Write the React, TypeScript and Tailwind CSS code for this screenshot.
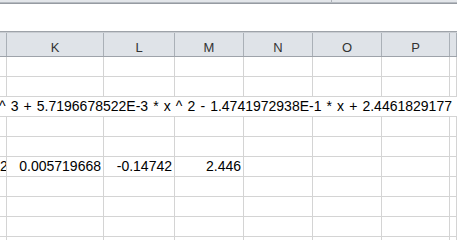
import React from "react";

const columns = [
  { label: "J", width: "w-[7px]" },
  { label: "K", width: "w-[97px]" },
  { label: "L", width: "w-[71px]" },
  { label: "M", width: "w-[69px]" },
  { label: "N", width: "w-[69px]" },
  { label: "O", width: "w-[69px]" },
  { label: "P", width: "w-[68px]" },
  { label: "Q", width: "flex-1" },
];

const formula =
  "^ 3 + 5.7196678522E-3 * x ^ 2 - 1.4741972938E-1 * x + 2.4461829177";

// values for the coefficient row, right aligned like numbers in a sheet
const coefficients: Record<string, string> = {
  J: "2",
  K: "0.005719668",
  L: "-0.14742",
  M: "2.446",
};

function GridRow({ values }: { values?: Record<string, string> }) {
  return (
    <div className="flex h-[20px] border-b border-[#d4d4d4]">
      {columns.map((col) => (
        <div
          key={col.label}
          className={`${col.width} shrink-0 overflow-hidden border-r border-[#d4d4d4] text-right pr-[2px] leading-[19px] whitespace-nowrap`}
        >
          {values?.[col.label] ?? ""}
        </div>
      ))}
    </div>
  );
}

export default function App() {
  return (
    <div
      className="w-[457px] h-[240px] overflow-hidden bg-white text-[14px] text-black"
      style={{ fontFamily: '"Liberation Sans", Arial, sans-serif' }}
    >
      {/* bottom edge of the formula bar area */}
      <div className="flex h-[2px] bg-[#e3e6ea]">
        <div className="w-[331px]" />
        <div className="w-px bg-[#aeb3b9]" />
      </div>
      <div className="h-px bg-[#b6bbc1]" />
      <div className="h-px bg-[#969ba2]" />
      <div className="h-[27px] bg-white" />
      <div className="h-px bg-[#9ea3a9]" />
      <div className="h-px bg-[#c9cdd2]" />

      {/* column headers */}
      <div className="flex h-[24px] bg-[#dfe3e8] border-b border-[#9ea3aa]">
        {columns.map((col) => (
          <div
            key={col.label}
            className={`${col.width} shrink-0 overflow-hidden border-r border-[#aab0b7] text-center text-[13px] leading-[13px] pt-[8px] text-[#333]`}
          >
            {col.label === "J" || col.label === "Q" ? "" : col.label}
          </div>
        ))}
      </div>

      <GridRow />
      <GridRow />
      <div className="flex h-[20px] items-center border-b border-[#d4d4d4] leading-[19px] whitespace-nowrap [word-spacing:1.2px]">
        <span className="-ml-[1px]">{formula}</span>
      </div>
      <GridRow />
      <GridRow />
      <GridRow values={coefficients} />
      <GridRow />
      <GridRow />
      <GridRow />
      <GridRow />
    </div>
  );
}
